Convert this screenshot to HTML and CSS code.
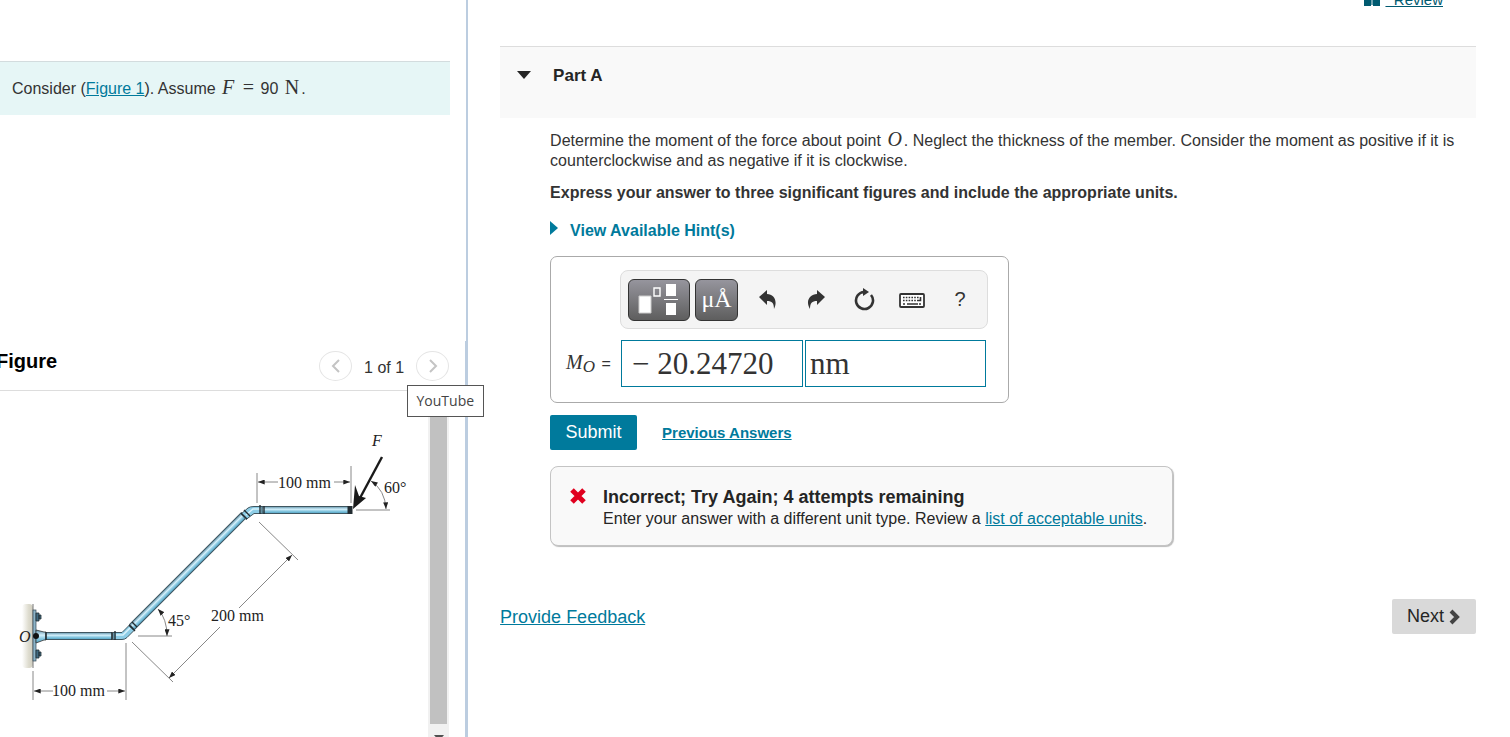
FILE: index.html
```
<!DOCTYPE html>
<html lang="en">
<head>
  <meta charset="UTF-8" />
  <meta name="viewport" content="width=device-width, initial-scale=1" />
  <title>Moment of a Force</title>
  <link rel="stylesheet" href="styles.css">
</head>
<body>
  <aside class="left-pane">
    <div class="intro">
      <p>Consider (<a href="#figure">Figure 1</a>). Assume <span class="math"><i>F</i></span> <span class="math">=</span> 90 <span class="math">N</span>.</p>
    </div>
    <section class="figure-pane" id="figure">
      <div class="figure-header">
        <h2>Figure</h2>
        <div class="pager">
          <button class="round" aria-label="Previous figure">
            <svg width="12" height="16" viewBox="0 0 12 16"><path d="M9 2L3 8l6 6" /></svg>
          </button>
          <span>1 of 1</span>
          <button class="round" aria-label="Next figure">
            <svg width="12" height="16" viewBox="0 0 12 16"><path d="M3 2l6 6-6 6" /></svg>
          </button>
        </div>
        <div class="tooltip" role="tooltip">YouTube</div>
      </div>
      <div class="figure-body">
        <svg class="diagram" width="428" height="346" viewBox="0 391 428 346" role="img" aria-label="Bent pipe loaded by force F">
          <defs>
            <linearGradient id="pipe" x1="0" y1="0" x2="0" y2="1">
              <stop offset="0" stop-color="#5f93ab" />
              <stop offset="0.4" stop-color="#d3effa" />
              <stop offset="0.65" stop-color="#8ccbe3" />
              <stop offset="1" stop-color="#4d9fc0" />
            </linearGradient>
            <linearGradient id="wall" x1="0" y1="0" x2="1" y2="0">
              <stop offset="0" stop-color="#fff" />
              <stop offset="0.6" stop-color="#dedccf" />
              <stop offset="1" stop-color="#cfcdbf" />
            </linearGradient>
            <marker id="tip" viewBox="0 0 8 6" refX="8" refY="3" markerWidth="7" markerHeight="5" markerUnits="userSpaceOnUse" orient="auto-start-reverse">
              <path d="M0 0l8 3-8 3z" fill="#222" />
            </marker>
          </defs>

          <!-- wall and bracket -->
          <rect x="22" y="604" width="11" height="64" rx="4" fill="url(#wall)" />
          <path d="M33 604v64" stroke="#777" />
          <rect x="33" y="610" width="3" height="51" fill="#8db4c8" stroke="#344650" stroke-width="0.7" />
          <g fill="#416a80" stroke="#222d33" stroke-width="0.8">
            <path d="M36 613h3v8h-3zM39 615h2v4h-2zM36 650h3v8h-3zM39 652h2v4h-2z" />
          </g>
          <path d="M36 630l8 2h2v8h-2l-8 3z" fill="url(#pipe)" stroke="#333" stroke-width="0.8" />
          <circle cx="36" cy="636" r="3" fill="#111" />

          <!-- pipe -->
          <g fill="url(#pipe)" stroke="#3f5660">
            <rect x="46" y="632.500" width="66" height="7" />
            <rect x="262" y="506.500" width="88" height="7" />
            <rect x="0" y="-3.500" width="158" height="7" transform="translate(132 627) rotate(-45)" />
          </g>
          <path d="M113 632.500h9l7-7 5 5-7 7q-2 2-5 2h-9z" fill="#8dcde6" stroke="#3f5660" />
          <path d="M241 514l7-6q2-1.500 6-1.500h8v7h-8l-8 6z" fill="#8dcde6" stroke="#3f5660" />
          <path d="M116 635h7l7-7M246 515l7-6h8" fill="none" stroke="#d8f2fb" stroke-width="1.6" />
          <g stroke="#222c31" stroke-width="1.4">
            <path d="M46 632v8M112 632v8M115 631v9M129 625l6 6M132 622l5 5M241 513l6 6M244 510l6 6M260 505v9M264 506v8" />
            <path d="M350 506v8" stroke-width="5" />
          </g>

          <!-- dimensions -->
          <g fill="none" stroke="#888">
            <path d="M33 671v29M126 643v57M138 636h34M132 642l41 40M259 522l39 38M257 473v30M351 466v37M356 510h34" />
            <g marker-end="url(#tip)">
              <path d="M53 691H34" marker-end="url(#tip)" />
              <path d="M107 691h18" marker-end="url(#tip)" />
              <path d="M278 482h-20" marker-end="url(#tip)" />
              <path d="M334 482h16" marker-end="url(#tip)" />
              <path d="M220 627l-51 51" marker-end="url(#tip)" />
              <path d="M239 608l53-53" marker-end="url(#tip)" />
            </g>
            <path d="M158 609q9 10 9 27" marker-start="url(#tip)" marker-end="url(#tip)" />
            <path d="M371 481q14 9 15 28" marker-start="url(#tip)" marker-end="url(#tip)" />
          </g>

          <!-- force -->
          <path d="M382 457l-22 41" stroke="#1a1a1a" stroke-width="2.4" />
          <path d="M353 509l2-24 4 11 7 2z" fill="#1a1a1a" />

          <g class="labels">
            <text x="52" y="696">100 mm</text>
            <text x="278" y="488">100 mm</text>
            <text x="211" y="621">200 mm</text>
            <text x="168" y="626">45°</text>
            <text x="384" y="493">60°</text>
            <text x="19" y="642" font-style="italic">O</text>
            <text x="372" y="446" font-style="italic">F</text>
          </g>
        </svg>
        <div class="scrollbar">
          <div class="thumb"></div>
          <svg width="10" height="6" viewBox="0 0 10 6"><path d="M0 0h10L5 6z" fill="#505050" /></svg>
        </div>
      </div>
    </section>
  </aside>

  <main class="right-pane">
    <div class="top-links">
      <svg width="16" height="14" viewBox="0 0 16 14"><path d="M0 0h7v13H0zM9 0h7v13H9z" fill="#005a70" /><path d="M7 0h2v12H7z" fill="#6fa3b0" /></svg>
      <a href="#">&nbsp; Review</a>
    </div>

    <div class="part-header">
      <svg width="14" height="8" viewBox="0 0 14 8"><path d="M0 0h14L7 8z" fill="#252525" /></svg>
      <h1>Part A</h1>
    </div>

    <div class="part-body">
      <p>Determine the moment of the force about point <span class="math"><i>O</i></span>. Neglect the thickness of the member. Consider the moment as positive if it is counterclockwise and as negative if it is clockwise.</p>
      <p class="instructions">Express your answer to three significant figures and include the appropriate units.</p>
      <button class="hints">
        <svg width="8" height="14" viewBox="0 0 8 14"><path d="M0 0l8 7-8 7z" fill="#007a9c" /></svg>
        View Available Hint(s)
      </button>

      <div class="answer-box">
        <div class="toolbar">
          <button class="dark templates" aria-label="Templates">
            <svg width="42" height="34" viewBox="0 0 42 34">
              <path d="M1 13h12v17H1z" fill="#fff" stroke="#ccc" />
              <path d="M16 5h6v8h-6z" fill="none" stroke="#fff" stroke-width="1.4" />
              <path d="M28 1h10v12H28zM28 20h10v12H28zM26 16h14v1H26z" fill="#fff" />
            </svg>
          </button>
          <button class="dark units" aria-label="Units">μÅ</button>
          <button class="tool" aria-label="Undo">
            <svg width="18" height="20" viewBox="0 0 18 20"><path d="M0 7l8-7v4c7 0 11 7 7 15 0-6-2-8-7-8v4z" fill="#333" /></svg>
          </button>
          <button class="tool" aria-label="Redo">
            <svg width="18" height="20" viewBox="0 0 18 20"><path d="M18 7l-8-7v4c-7 0-12 7-7 15 0-6 2-8 7-8v4z" fill="#333" /></svg>
          </button>
          <button class="tool" aria-label="Reset">
            <svg width="22" height="24" viewBox="0 0 22 24"><path d="M11 4a8.500 8.500 0 1 0 7 3" fill="none" stroke="#333" stroke-width="2.6" /><path d="M10 0l6 4-6 4z" fill="#333" /></svg>
          </button>
          <button class="tool" aria-label="Keyboard">
            <svg width="26" height="16" viewBox="0 0 26 16">
              <rect x="1" y="2" width="24" height="13" rx="1" fill="#fff" stroke="#333" stroke-width="1.8" />
              <path d="M4 5.500h16M4 8.500h14" stroke="#333" stroke-width="1.6" stroke-dasharray="1.600 1.200" />
              <path d="M4 12h2M8 12h11M20 12h2M18 8.500h3.500V5" fill="none" stroke="#333" stroke-width="1.6" />
            </svg>
          </button>
          <button class="tool" aria-label="Help">?</button>
        </div>
        <div class="answer-row">
          <label for="answerValue"><span class="math"><i>M<sub>O</sub></i></span> =</label>
          <input type="text" id="answerValue" class="value" value="− 20.24720" />
          <input type="text" id="answerUnits" aria-label="Units" value="nm" />
        </div>
      </div>

      <div class="actions">
        <button class="submit">Submit</button>
        <a href="#">Previous Answers</a>
      </div>

      <div class="feedback">
        <svg width="18" height="18" viewBox="0 0 18 18"><path d="M3 3l12 12M15 3L3 15" stroke="#e0001f" stroke-width="5" /></svg>
        <div>
          <h3>Incorrect; Try Again; 4 attempts remaining</h3>
          <p>Enter your answer with a different unit type. Review a <a href="#">list of acceptable units</a>.</p>
        </div>
      </div>
    </div>

    <div class="footer">
      <a href="#">Provide Feedback</a>
      <button class="next">Next
        <svg width="12" height="16" viewBox="0 0 12 16"><path d="M2 2l6 6-6 6" fill="none" stroke="#444" stroke-width="4" /></svg>
      </button>
    </div>
  </main>
</body>
</html>
```
FILE: styles.css
```
* {
  box-sizing: border-box;
}
body {
  margin: 0;
  display: flex;
  height: 100vh;
  overflow: hidden;
  background: #fff;
  color: #333;
  font-family: "Liberation Sans", Arial, sans-serif;
  font-size: 16px;
  line-height: 20px;
}
h1, h2, h3, p {
  margin: 0;
}
a {
  color: #007a9c;
}
button {
  font-family: inherit;
  padding: 0;
  cursor: pointer;
}
.math {
  margin: 0 2px;
  font-family: "Liberation Serif", serif;
  font-size: 20px;
  line-height: 0;
}

/* left side */
.left-pane {
  flex: 0 0 31%;
  display: flex;
  flex-direction: column;
  padding-top: 61px;
  border-right: 2px solid #bccde0;
}
.intro {
  margin-right: 16px;
  padding: 17px 12px 16px;
  border-top: 1px solid #d3dcde;
  background: #e6f6f6;
}
.figure-pane {
  flex: 1;
  display: flex;
  flex-direction: column;
  margin-top: 226px;
  padding-right: 16px;
  border-right: 1px solid #bccde0;
}
.figure-header {
  position: relative;
  display: flex;
  justify-content: space-between;
  height: 50px;
  border-bottom: 1px solid #ddd;
}
.figure-header h2 {
  margin-left: -4px;
  padding-top: 10px;
  font-size: 20px;
  color: #000;
}
.pager {
  display: flex;
  align-items: center;
  gap: 12px;
}
.pager span {
  padding-top: 4px;
}
.round {
  display: flex;
  align-items: center;
  justify-content: center;
  width: 33px;
  height: 30px;
  border: 1px solid #e5e5e5;
  border-radius: 50%;
  background: #fff;
}
.round svg {
  fill: none;
  stroke: #c4c4c4;
  stroke-width: 2;
}
.tooltip {
  position: absolute;
  top: 44px;
  right: -35px;
  z-index: 1;
  padding: 5px 9px;
  border: 1px solid #555;
  background: #fff;
  color: #444;
  font-family: "Open Sans", sans-serif;
  font-size: 14px;
}
.figure-body {
  flex: 1;
  display: flex;
  justify-content: space-between;
  min-height: 0;
}
.diagram {
  flex: none;
}
.labels {
  fill: #222;
  font-family: "Liberation Serif", serif;
  font-size: 16px;
}
.scrollbar {
  display: flex;
  flex-direction: column;
  align-items: center;
  gap: 11px;
  width: 21px;
  padding: 0 2px;
  overflow: hidden;
  background: #f1f1f1;
}
.scrollbar svg {
  flex: none;
}
.thumb {
  width: 100%;
  height: calc(100% - 13px);
  flex: none;
  background: #c1c1c1;
}

/* right side */
.right-pane {
  flex: 1;
  padding: 0 34px 0 32px;
}
.top-links {
  display: flex;
  align-items: center;
  justify-content: flex-end;
  gap: 5px;
  margin-top: -10px;
  padding-right: 33px;
  font-size: 15px;
}
.top-links a {
  color: #005a70;
}
.part-header {
  display: flex;
  gap: 22px;
  height: 72px;
  margin-top: 36px;
  padding: 19px 17px;
  border-top: 1px solid #ddd;
  background: #f9f9f9;
}
.part-header svg {
  margin-top: 5px;
}
.part-header h1 {
  font-size: 17px;
  line-height: 20px;
  color: #252525;
}
.part-body {
  padding: 13px 0 0 50px;
}
.instructions {
  margin-top: 12px;
  font-weight: bold;
}
.hints {
  display: flex;
  gap: 12px;
  margin-top: 18px;
  border: none;
  background: none;
  color: #007a9c;
  font-size: 16px;
  font-weight: bold;
  line-height: 20px;
}
.answer-box {
  width: 459px;
  margin-top: 15px;
  padding: 13px 20px 15px 15px;
  border: 1px solid #aaa;
  border-radius: 7px;
}
.toolbar {
  display: flex;
  align-items: center;
  height: 59px;
  margin-left: 54px;
  padding-left: 7px;
  border: 1px solid #ddd;
  border-radius: 8px;
  background: #f4f4f4;
}
.toolbar button {
  display: flex;
  flex: none;
  align-items: center;
  justify-content: center;
  height: 42px;
}
.dark {
  width: 43px;
  border: 1px solid #333;
  border-radius: 6px;
  background: linear-gradient(#96959d, #5e5e5e);
  color: #fff;
  font-family: "Liberation Serif", serif;
  font-size: 24px;
}
.templates {
  width: 62px;
  margin-right: 5px;
}
.units {
  margin-right: 6px;
}
.tool {
  width: 48px;
  border: none;
  background: none;
  color: #333;
  font-size: 20px;
}
.answer-row {
  display: flex;
  align-items: center;
  gap: 2px;
  margin-top: 11px;
  padding-right: 2px;
}
.answer-row label {
  flex: none;
  width: 53px;
}
.answer-row .math {
  margin-left: 0;
}
.answer-row sub {
  font-size: 17px;
  vertical-align: -3px;
}
.answer-row input {
  flex: 1 1 50%;
  min-width: 0;
  height: 47px;
  padding: 0 4px;
  border: 1px solid #007a9c;
  color: #333;
  font-family: "Liberation Serif", serif;
  font-size: 31px;
}
.answer-row .value {
  padding-left: 10px;
}
.actions {
  display: flex;
  align-items: center;
  gap: 25px;
  margin-top: 12px;
}
.actions a {
  font-size: 15px;
  font-weight: bold;
}
.submit {
  width: 87px;
  height: 35px;
  border: none;
  border-radius: 2px;
  background: #007a9c;
  color: #fff;
  font-size: 18px;
}
.feedback {
  display: flex;
  gap: 16px;
  width: fit-content;
  margin-top: 16px;
  padding: 18px 25px 16px 18px;
  border: 1px solid #c4c4c4;
  border-radius: 8px;
  background: #f9f9f9;
  box-shadow: 1px 1px 1px #bbb;
  color: #252525;
}
.feedback svg {
  margin-top: 2px;
}
.feedback h3 {
  font-size: 18px;
  line-height: 24px;
}
.footer {
  display: flex;
  align-items: center;
  justify-content: space-between;
  margin-top: 53px;
  font-size: 18px;
}
.next {
  display: flex;
  align-items: center;
  justify-content: center;
  gap: 5px;
  width: 84px;
  height: 35px;
  border: none;
  border-radius: 2px;
  background: #d9d9d9;
  color: #252525;
  font-size: 18px;
}
```
